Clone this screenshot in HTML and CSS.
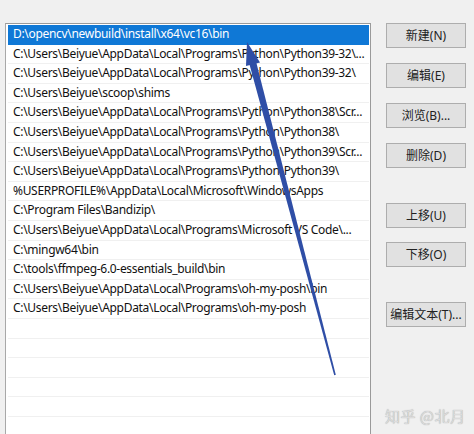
FILE: index.html
```html
<!DOCTYPE html>
<html lang="zh-CN">
<head>
<meta charset="utf-8">
<title>编辑环境变量</title>
<link rel="stylesheet" href="styles.css">
</head>
<body>
<div class="dialog">
  <div class="list">
    <div class="row selected">D:\opencv\newbuild\install\x64\vc16\bin</div>
    <div class="row">C:\Users\Beiyue\AppData\Local\Programs\Python\Python39-32\...</div>
    <div class="row">C:\Users\Beiyue\AppData\Local\Programs\Python\Python39-32\</div>
    <div class="row">C:\Users\Beiyue\scoop\shims</div>
    <div class="row">C:\Users\Beiyue\AppData\Local\Programs\Python\Python38\Scr...</div>
    <div class="row">C:\Users\Beiyue\AppData\Local\Programs\Python\Python38\</div>
    <div class="row">C:\Users\Beiyue\AppData\Local\Programs\Python\Python39\Scr...</div>
    <div class="row">C:\Users\Beiyue\AppData\Local\Programs\Python\Python39\</div>
    <div class="row">%USERPROFILE%\AppData\Local\Microsoft\WindowsApps</div>
    <div class="row">C:\Program Files\Bandizip\</div>
    <div class="row">C:\Users\Beiyue\AppData\Local\Programs\Microsoft VS Code\...</div>
    <div class="row">C:\mingw64\bin</div>
    <div class="row">C:\tools\ffmpeg-6.0-essentials_build\bin</div>
    <div class="row">C:\Users\Beiyue\AppData\Local\Programs\oh-my-posh\bin</div>
    <div class="row">C:\Users\Beiyue\AppData\Local\Programs\oh-my-posh</div>
    <div class="row"></div>
    <div class="row"></div>
    <div class="row"></div>
    <div class="row"></div>
    <div class="row"></div>
  </div>
  <div class="buttons">
    <div class="group">
      <button class="btn">新建(N)</button>
      <button class="btn">编辑(E)</button>
      <button class="btn">浏览(B)...</button>
      <button class="btn">删除(D)</button>
    </div>
    <div class="group move">
      <button class="btn">上移(U)</button>
      <button class="btn">下移(O)</button>
    </div>
    <div class="group text">
      <button class="btn">编辑文本(T)...</button>
    </div>
  </div>
</div>
<svg class="arrow" width="474" height="434" viewBox="0 0 474 434">
  <polygon points="249.1,62.9 255.9,61.1 335.8,374.8 334.2,375.2" fill="#2f4ea6"/>
  <polygon points="247,42 260,62.4 246,66" fill="#2f4ea6"/>
</svg>
<div class="watermark">知乎 @北月</div>
</body>
</html>
```
FILE: styles.css
```css
html, body {
  margin: 0;
  padding: 0;
  height: 100%;
  overflow: hidden;
}
body {
  background: #f0f0f0;
  font-family: "Noto Sans", "Noto Sans CJK SC", sans-serif;
  position: relative;
}
.dialog {
  display: flex;
  align-items: flex-start;
  padding: 23px 0 0 5px;
}
.list {
  box-sizing: border-box;
  width: 366px;
  height: 411px;
  overflow: hidden;
  background: #ffffff;
  border: 1px solid #9a9a9a;
  border-left-color: #a8a8a8;
  border-bottom: 0;
  padding-top: 1px;
}
.row {
  box-sizing: border-box;
  height: 19.6px;
  line-height: 18.6px;
  margin: 0 1px 0 2px;
  padding-left: 5px;
  border-bottom: 1px solid #f0f0f0;
  font-size: 12px;
  letter-spacing: -0.31px;
  color: #111;
  white-space: nowrap;
}
.row.selected {
  background: #0f78d6;
  color: #ffffff;
  border-bottom-color: #0f78d6;
}
.buttons {
  display: flex;
  flex-direction: column;
  margin-left: 15px;
}
.group {
  display: flex;
  flex-direction: column;
  gap: 15px;
}
.group.move {
  margin-top: 35px;
  gap: 14px;
}
.group.text {
  margin-top: 35px;
}
.btn {
  width: 80px;
  height: 25px;
  margin: 0;
  padding: 0;
  background: #e1e1e1;
  border: 1px solid #adadad;
  font-family: "Noto Sans", "Noto Sans CJK SC", sans-serif;
  font-size: 12px;
  color: #222;
  line-height: 23px;
}
.arrow {
  position: absolute;
  left: 0;
  top: 0;
}
.watermark {
  position: absolute;
  left: 385px;
  top: 405px;
  font-family: "Noto Sans CJK SC", sans-serif;
  font-size: 15px;
  color: #dcdcdc;
  text-shadow: 0 0 1px #9a9a9a;
  letter-spacing: 0.5px;
}
```
